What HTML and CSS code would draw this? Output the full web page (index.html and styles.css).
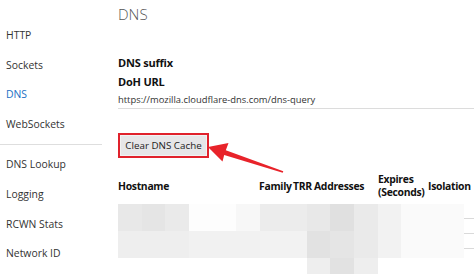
FILE: index.html
```html
<!DOCTYPE html>
<html>
<head>
<meta charset="utf-8">
<link rel="stylesheet" href="styles.css">
</head>
<body>
<div class="page">
  <nav class="sidebar">
    <ul class="menu">
      <li>HTTP</li>
      <li>Sockets</li>
      <li class="active">DNS</li>
      <li>WebSockets</li>
    </ul>
    <div class="sep"></div>
    <ul class="menu">
      <li>DNS Lookup</li>
      <li>Logging</li>
      <li>RCWN Stats</li>
      <li>Network ID</li>
    </ul>
  </nav>
  <main class="main">
    <h1 class="title">DNS</h1>
    <div class="label first">DNS suffix</div>
    <div class="label">DoH URL</div>
    <div class="url">https://mozilla.cloudflare-dns.com/dns-query</div>
    <div class="btn-frame"><button class="btn">Clear DNS Cache</button></div>
    <div class="thead">
      <div class="th c-host">Hostname</div>
      <div class="th c-fam">Family</div>
      <div class="th c-trr">TRR</div>
      <div class="th c-addr">Addresses</div>
      <div class="th c-exp">Expires<br>(Seconds)</div>
      <div class="th c-iso">Isolation</div>
    </div>
    <div class="tbody">
      <div class="blur">
        <div class="s9"></div><div class="s7"></div><div class="sa"></div><div class="s1"></div><div class="s1"></div><div class="s3"></div><div class="sb"></div><div class="sb"></div><div class="s9"></div><div class="s6"></div><div class="sa"></div><div class="s4"></div><div class="s2"></div>
        <div class="sc"></div><div class="sc"></div><div class="sc"></div><div class="s5"></div><div class="s5"></div><div class="s5"></div><div class="s4"></div><div class="s4"></div><div class="s8"></div><div class="s7"></div><div class="sa"></div><div class="s4"></div><div class="s2"></div>
        <div class="s0"></div><div class="s0"></div><div class="s0"></div><div class="s0"></div><div class="s0"></div><div class="s0"></div><div class="s0"></div><div class="s0"></div><div class="sc"></div><div class="s8"></div><div class="sc"></div><div class="s0"></div><div class="s0"></div>
      </div>
      <div class="edge">
        <div class="tick"></div><div class="tick"></div><div class="tick"></div>
      </div>
    </div>
  </main>
</div>
<svg class="arrow" width="474" height="274" viewBox="0 0 474 274">
  <polygon points="208,147 228.5,143 225.8,150.3 283.3,171.2 282.7,172.8 224.2,155.1 222.5,161.5" fill="#e8232a"/>
</svg>
</body>
</html>
```

FILE: styles.css
```css
html, body {
  margin: 0;
  padding: 0;
  background: #ffffff;
}
body {
  width: 474px;
  height: 274px;
  overflow: hidden;
  position: relative;
  font-family: "Open Sans", "Noto Sans", "Liberation Sans", sans-serif;
  color: #222;
}
.page {
  display: flex;
  height: 274px;
}
.sidebar {
  width: 102px;
  flex: none;
  padding-top: 21px;
}
.menu {
  list-style: none;
  margin: 0;
  padding: 0;
}
.menu li {
  height: 29.6px;
  line-height: 29.6px;
  padding-left: 6px;
  font-size: 10.4px;
  color: #333;
  white-space: nowrap;
}
.menu li.active {
  color: #1a6fc4;
}
.sep {
  height: 1px;
  background: #dedede;
  margin: 5px 0 5px 0;
}
.main {
  flex: 1;
  padding-left: 16px;
  padding-top: 4px;
  min-width: 0;
}
.title {
  margin: 0;
  font-size: 15px;
  font-weight: 300;
  line-height: 20px;
  color: #555;
}
.label {
  font-size: 11px;
  font-weight: 700;
  line-height: 19px;
  color: #111;
  letter-spacing: -0.2px;
}
.label.first {
  margin-top: 28.5px;
}
.url {
  margin-top: 1.5px;
  font-size: 9.4px;
  line-height: 16px;
  color: #333;
  border-bottom: 1px solid #dcdcdc;
}
.btn-frame {
  margin-top: 24px;
  width: 87px;
  height: 21px;
  border: 2px solid #e0222c;
  background: #e8e8ea;
  display: flex;
}
.btn {
  flex: 1;
  border: 1px solid #f2f2f2;
  background: #e6e6e8;
  font-family: inherit;
  font-size: 9.8px;
  color: #222;
  padding: 0;
  margin: 0;
  line-height: 19px;
}
.thead {
  display: flex;
  align-items: center;
  margin-top: 12px;
  height: 32px;
}
.th {
  font-size: 10.4px;
  font-weight: 700;
  line-height: 13px;
  color: #111;
  white-space: nowrap;
  letter-spacing: -0.3px;
}
.c-host { width: 141px; }
.c-fam { width: 34px; }
.c-trr { width: 21px; }
.c-addr { width: 64px; }
.c-exp { width: 50px; }
.c-iso { flex: 1; }
.tbody {
  display: flex;
  margin-top: 2px;
}
.blur {
  display: grid;
  grid-template-columns: repeat(12, 23.6px) 63px;
  grid-template-rows: 27px 27px 16px;
}
.edge {
  flex: 1;
  padding-top: 14px;
}
.tick {
  height: 14px;
  border-top: 1px solid #dadada;
}
.s0 { background: #ffffff; }
.s1 { background: #fdfdfd; }
.s2 { background: #fafafa; }
.s3 { background: #f7f7f7; }
.s4 { background: #f2f2f2; }
.s5 { background: #f1f1f1; }
.s6 { background: #e0e0e0; }
.s7 { background: #e5e5e5; }
.s8 { background: #e2e2e2; }
.s9 { background: #e8e8e8; }
.sa { background: #eaeaea; }
.sb { background: #ececec; }
.sc { background: #eeeeee; }
.arrow {
  position: absolute;
  left: 0;
  top: 0;
  pointer-events: none;
}
```
